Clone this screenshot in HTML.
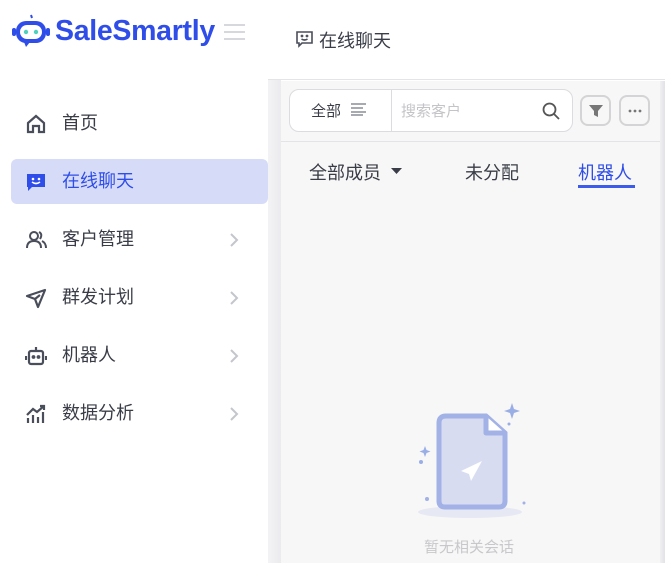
<!DOCTYPE html>
<html><head><meta charset="utf-8"><style>
*{margin:0;padding:0;box-sizing:border-box}
body{width:665px;height:563px;overflow:hidden;background:#fff;font-family:"Liberation Sans","Noto Sans CJK SC",sans-serif;position:relative}
.side{position:absolute;left:0;top:0;width:268px;height:563px;background:#fff}
.gap{position:absolute;left:268px;top:80px;width:13px;height:483px;background:linear-gradient(90deg,#f3f3f5,#ebebee)}
.head{position:absolute;left:268px;top:0;width:397px;height:80px;background:#fff;border-bottom:1px solid #e4e4e8}
.main{position:absolute;left:281px;top:81px;width:381px;height:482px;background:#f7f7f7}
.redge{position:absolute;left:660px;top:81px;width:5px;height:482px;background:linear-gradient(90deg,#f0f0f2,#e2e2e6)}
.logo{position:absolute;left:11px;top:14px}
.brand{position:absolute;left:55px;top:15px;font-size:28.5px;font-weight:bold;color:#2f4de8;letter-spacing:-0.3px}
.ham{position:absolute;left:224px;top:24px;width:21px}
.ham i{display:block;height:2px;background:#d6d8de;margin-bottom:5px}
.item{position:absolute;left:11px;width:257px;height:45px;font-size:18px;color:#3a3d47;line-height:45px;padding-left:51px}
.item svg{position:absolute;left:14px;top:12px}
.item .ar{position:absolute;left:217px;top:15px}
.act{background:#d6dcf8;border-radius:6px;color:#2f4de8}
.search{position:absolute;left:8px;top:8px;width:284px;height:43px;border:1px solid #dcdce0;border-radius:10px;background:#fff}
.btn{position:absolute;top:14px;width:31px;height:31px;border:2px solid #d4d4d6;border-radius:8px;background:#f7f7f7}
.tabs{position:absolute;left:0;top:60px;width:381px;border-top:1px solid #e4e4e8;height:60px;font-size:18px;color:#3a3d47}
</style></head><body>
<div class="side">
<svg class="logo" width="40" height="36" viewBox="0 0 40 36"><path d="M20 1 l1 3" stroke="#2f4de8" stroke-width="2"/><rect x="5" y="7" width="30" height="22" rx="10" fill="#2f4de8"/><rect x="9" y="11" width="22" height="14" rx="7" fill="#fff"/><circle cx="15" cy="18" r="2.2" fill="#4fd1c0"/><circle cx="25" cy="18" r="2.2" fill="#4fd1c0"/><rect x="1" y="14" width="4" height="8" rx="2" fill="#2f4de8"/><rect x="35" y="14" width="4" height="8" rx="2" fill="#2f4de8"/><path d="M13 28 l2 5 l4 -5z" fill="#2f4de8"/></svg>
<div class="brand">SaleSmartly</div>
<div class="ham"><i></i><i></i><i></i></div>
<div class="item" style="top:101px"><svg width="22" height="22" viewBox="0 0 22 22" fill="none" stroke="#4a4e5a" stroke-width="2.2"><path d="M3 10 L11 3 L19 10 V19 H14 V13 H8 V19 H3Z"/></svg>首页</div>
<div class="item act" style="top:159px"><svg width="22" height="22" viewBox="0 0 22 22"><path d="M2 3 H20 V16 H7 L3 20 V16 H2Z" fill="#2f4de8"/><circle cx="8" cy="8" r="1.3" fill="#fff"/><circle cx="14" cy="8" r="1.3" fill="#fff"/><path d="M7 11 Q11 14 15 11" stroke="#fff" stroke-width="1.6" fill="none"/></svg>在线聊天</div>
<div class="item" style="top:217px"><svg width="22" height="22" viewBox="0 0 22 22" fill="none" stroke="#4a4e5a" stroke-width="2"><circle cx="9" cy="7" r="4"/><path d="M2 19 Q2 12 9 12 Q16 12 16 19"/><path d="M14 3 Q18 5 15 10 M17 12 Q21 14 21 19"/></svg>客户管理<svg class="ar" width="12" height="16" viewBox="0 0 12 16"><path d="M3 2 L9 8 L3 14" stroke="#c4c6cc" stroke-width="2" fill="none"/></svg></div>
<div class="item" style="top:275px"><svg width="22" height="22" viewBox="0 0 22 22" fill="none" stroke="#4a4e5a" stroke-width="2.2" stroke-linejoin="round"><path d="M2 9 L20 3 L13 20 L10 12Z M10 12 L15 8"/></svg>群发计划<svg class="ar" width="12" height="16" viewBox="0 0 12 16"><path d="M3 2 L9 8 L3 14" stroke="#c4c6cc" stroke-width="2" fill="none"/></svg></div>
<div class="item" style="top:333px"><svg width="22" height="22" viewBox="0 0 22 22" fill="none" stroke="#4a4e5a" stroke-width="2.2"><path d="M11 2 V6"/><rect x="4" y="6" width="14" height="13" rx="2"/><path d="M1 11 V15 M21 11 V15"/><circle cx="8.5" cy="12" r="0.8" fill="#4a4e5a"/><circle cx="13.5" cy="12" r="0.8" fill="#4a4e5a"/></svg>机器人<svg class="ar" width="12" height="16" viewBox="0 0 12 16"><path d="M3 2 L9 8 L3 14" stroke="#c4c6cc" stroke-width="2" fill="none"/></svg></div>
<div class="item" style="top:391px"><svg width="22" height="22" viewBox="0 0 22 22" fill="none" stroke="#4a4e5a" stroke-width="2.2"><path d="M3 20 V15 M8 20 V12 M13 20 V14 M18 20 V9"/><path d="M2 12 L8 6 L12 9 L19 3 M15 3 H19 V7"/></svg>数据分析<svg class="ar" width="12" height="16" viewBox="0 0 12 16"><path d="M3 2 L9 8 L3 14" stroke="#c4c6cc" stroke-width="2" fill="none"/></svg></div>
</div>
<div class="head"><svg style="position:absolute;left:28px;top:31px" width="17" height="17" viewBox="0 0 17 17" fill="none" stroke="#4a4e5a" stroke-width="1.6"><path d="M1 1 H16 V12 H6 L3 15 V12 H1Z"/><circle cx="6" cy="5" r=".6"/><circle cx="11" cy="5" r=".6"/><path d="M5.5 8 Q8.5 10 11.5 8"/></svg><span style="position:absolute;left:51px;top:27px;font-size:18px;color:#3a3d47">在线聊天</span></div>
<div class="gap"></div>
<div class="main">
<div class="search"><span style="position:absolute;left:21px;top:10px;font-size:15px;color:#3a3d47">全部</span>
<svg style="position:absolute;left:61px;top:12px" width="15" height="14"><path d="M0 2H15M0 6H12M0 10H15M0 13H12" stroke="#8a8d96" stroke-width="1.6"/></svg>
<div style="position:absolute;left:101px;top:0;width:1px;height:41px;background:#dcdce0"></div>
<span style="position:absolute;left:111px;top:10px;font-size:15px;color:#c4c4c8">搜索客户</span>
<svg style="position:absolute;left:252px;top:12px" width="18" height="18" fill="none" stroke="#555" stroke-width="1.8"><circle cx="7.5" cy="7.5" r="6"/><path d="M12 12 L17 17"/></svg></div>
<div class="btn" style="left:299px"><svg style="position:absolute;left:6px;top:6px" width="16" height="16"><path d="M1 2 H15 L10 8 V14 L6 12 V8Z" fill="#777"/></svg></div>
<div class="btn" style="left:338px"><svg style="position:absolute;left:6px;top:12px" width="16" height="4"><circle cx="3" cy="2" r="1.4" fill="#777"/><circle cx="8" cy="2" r="1.4" fill="#777"/><circle cx="13" cy="2" r="1.4" fill="#777"/></svg></div>
<div class="tabs"><span style="position:absolute;left:28px;top:17px">全部成员</span><svg style="position:absolute;left:110px;top:26px" width="11" height="6"><path d="M0 0H11L5.5 6Z" fill="#3a3d47"/></svg>
<span style="position:absolute;left:184px;top:17px">未分配</span>
<span style="position:absolute;left:297px;top:17px;color:#2f4de8">机器人</span><div style="position:absolute;left:297px;top:43px;width:57px;height:3px;background:#3d5bea"></div></div>
<svg style="position:absolute;left:130px;top:318px" width="125" height="125" viewBox="0 0 125 125">
<ellipse cx="59" cy="113" rx="52" ry="6" fill="#e6e8f3"/>
<path d="M28 24 Q28 17 35 17 H75 L94 34 V102 Q94 108 88 108 H34 Q28 108 28 102Z" fill="#d8dcf1" stroke="#a2b1e6" stroke-width="5"/>
<path d="M75 17 V34 H94" fill="#fff" stroke="#a2b1e6" stroke-width="5" stroke-linejoin="round"/>
<path d="M50 72 L71 62 L60 82 L58 75Z" fill="#fff"/>
<path d="M101 4 L103 10 L109 12 L103 14 L101 20 L99 14 L93 12 L99 10Z" fill="#9aaee6"/>
<path d="M14 47 L15.5 51 L19.5 52.5 L15.5 54 L14 58 L12.5 54 L8.5 52.5 L12.5 51Z" fill="#9aaee6"/>
<circle cx="98" cy="25" r="1.5" fill="#9aaee6"/><circle cx="10" cy="63" r="2" fill="#9aaee6"/><circle cx="16" cy="100" r="2" fill="#a2b1e6"/><circle cx="113" cy="104" r="1.5" fill="#a2b1e6"/>
</svg>
<span style="position:absolute;left:143px;top:455px;font-size:15px;color:#c8c8cc">暂无相关会话</span>
</div>
<div class="redge"></div>
</body></html>
